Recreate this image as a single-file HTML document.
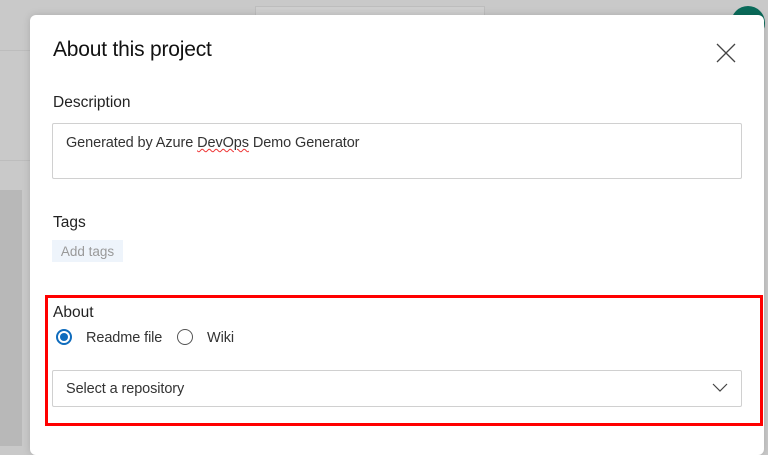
<!DOCTYPE html>
<html><head><style>
body{margin:0;width:768px;height:446px;overflow:hidden;background:#c9c9c9;font-family:"Segoe UI","Liberation Sans",sans-serif;position:relative}
.bgline{position:absolute;left:0;width:30px;height:1px;background:#bdbdbd}
.search{position:absolute;left:255px;top:6px;width:228px;height:9px;border:1px solid #bdbdbd;border-bottom:none;background:#cfcfcf}
.avatar{position:absolute;left:731px;top:6px;width:34px;height:34px;border-radius:50%;background:#0a6b5a}
.dlg{position:absolute;left:30px;top:15px;width:734px;height:440px;background:#fff;border-radius:6px;box-shadow:0 0 8px rgba(0,0,0,.15)}
.abs{position:absolute}
h1{position:absolute;left:23px;top:23px;margin:0;font-size:21px;font-weight:400;color:#111;letter-spacing:-.2px}
.lbl{position:absolute;font-size:15.5px;color:#222;font-weight:500}
.box{position:absolute;border:1px solid #d0d0d0;border-radius:2px;background:#fff}
.txt{font-size:14.5px;color:#333;letter-spacing:-.1px}
.red{position:absolute;left:15px;top:280px;width:712px;height:125px;border:3px solid #f00}
.radio{position:absolute;width:16px;height:16px;border-radius:50%;box-sizing:border-box}
</style></head><body>
<div class="bgline" style="top:50px"></div>
<div class="bgline" style="top:160px"></div>
<div class="abs" style="left:0;top:190px;width:22px;height:256px;background:#b8b8b8"></div>
<div class="search"></div>
<div class="avatar"></div>
<div class="dlg">
<h1>About this project</h1>
<svg class="abs" style="left:686px;top:28px" width="20" height="20"><path d="M1 1L19 19M19 1L1 19" stroke="#444" stroke-width="1.3"/></svg>
<div class="lbl" style="left:23px;top:79px">Description</div>
<div class="box" style="left:22px;top:108px;width:688px;height:54px"><div class="txt abs" style="left:13px;top:11px">Generated by Azure <span style="text-decoration:underline wavy #e33;text-decoration-thickness:1px">DevOps</span> Demo Generator</div></div>
<div class="lbl" style="left:23px;top:199px">Tags</div>
<div class="abs" style="left:22px;top:225px;width:71px;height:22px;background:#eef4fb;color:#999;font-size:13.5px;line-height:24px;text-align:center">Add tags</div>
<div class="red"></div>
<div class="lbl" style="left:23px;top:289px">About</div>
<div class="radio" style="left:26px;top:314px;border:2px solid #0f6cbd;padding:2px"><div style="width:8px;height:8px;border-radius:50%;background:#0f6cbd"></div></div>
<div class="txt abs" style="left:56px;top:315px">Readme file</div>
<div class="radio" style="left:147px;top:314px;border:1px solid #555"></div>
<div class="txt abs" style="left:177px;top:315px">Wiki</div>
<div class="box" style="left:22px;top:355px;width:688px;height:35px"><div class="txt abs" style="left:13px;top:10px">Select a repository</div>
<svg class="abs" style="left:659px;top:12px" width="16" height="10"><path d="M1 1L8 8L15 1" stroke="#444" stroke-width="1.2" fill="none"/></svg></div>
</div>
</body></html>
